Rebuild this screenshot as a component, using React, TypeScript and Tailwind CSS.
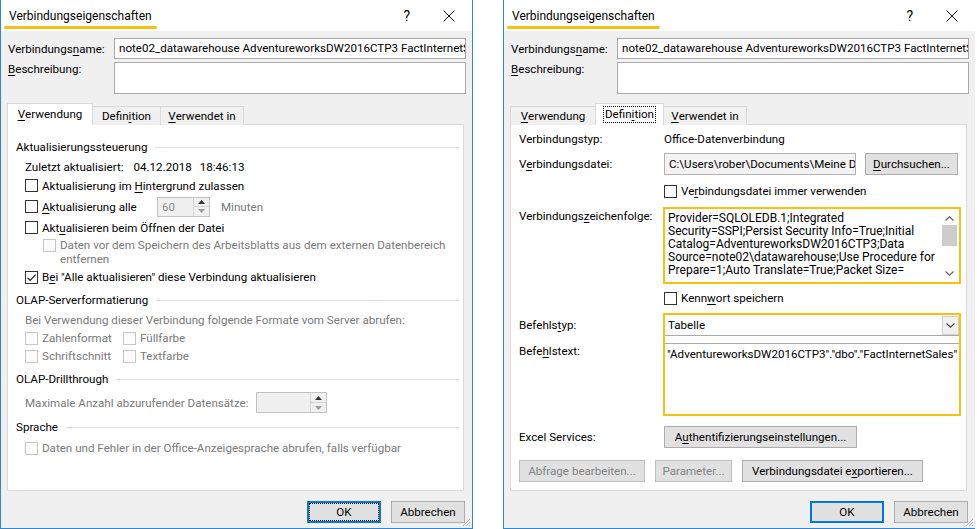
import React from 'react';

type Kids = { children?: React.ReactNode; className?: string };

const Key = ({ children }: Kids) => <span className="underline underline-offset-2 decoration-1">{children}</span>;

const Box = ({ checked, disabled }: { checked?: boolean; disabled?: boolean }) => (
  <span
    className={`w-[13px] h-[13px] shrink-0 border flex items-center justify-center ${
      disabled ? 'border-[#c8c8c8] bg-[#fcfcfc]' : 'border-[#333333] bg-white'
    }`}
  >
    {checked && (
      <svg viewBox="0 0 11 11" className="w-[11px] h-[11px]">
        <path d="M1.5 5.8 L4.2 8.4 L9.6 2.6" fill="none" stroke="#222" strokeWidth="1.2" />
      </svg>
    )}
  </span>
);

const Section = ({ title, className = '' }: { title: string; className?: string }) => (
  <div className={`flex items-center h-[16px] pl-[8px] pr-[4px] ${className}`}>
    <span>{title}</span>
    <span className="flex-1 h-px bg-[#dcdcdc] ml-[8px]" />
  </div>
);

const Button = ({ children, className = '', disabled, primary, focus }: Kids & { disabled?: boolean; primary?: boolean; focus?: boolean }) => (
  <div
    className={`h-[22px] flex items-center justify-center shrink-0 whitespace-nowrap ${
      primary ? 'border-2 border-[#0078d7] bg-[#e1e1e1]' : 'border border-[#adadad] bg-[#e1e1e1]'
    } ${disabled ? 'text-[#838383] border-[#bfbfbf] bg-[#cccccc]' : ''} ${className}`}
  >
    {focus ? (
      <span className="w-full h-full border border-dotted border-black flex items-center justify-center">{children}</span>
    ) : (
      children
    )}
  </div>
);

const Spin = ({ value, className = '' }: { value?: string; className?: string }) => (
  <div className={`flex border border-[#c2c2c2] bg-[#f0f0f0] ${className}`}>
    <span className="flex-1 pl-[4px] text-[#8a8a8a] flex items-center">{value}</span>
    <span className="w-[16px] flex flex-col border-l border-[#d4d4d4]">
      <span className="flex-1 flex items-center justify-center border-b border-[#d4d4d4]">
        <svg viewBox="0 0 7 4" className="w-[7px] h-[4px]"><path d="M0 4 L3.5 0 L7 4 Z" fill="#333" /></svg>
      </span>
      <span className="flex-1 flex items-center justify-center">
        <svg viewBox="0 0 7 4" className="w-[7px] h-[4px]"><path d="M0 0 L3.5 4 L7 0 Z" fill="#9a9a9a" /></svg>
      </span>
    </span>
  </div>
);

const Chevron = ({ up, color = '#606060' }: { up?: boolean; color?: string }) => (
  <svg viewBox="0 0 9 5" className="w-[9px] h-[5px]">
    <path d={up ? 'M0.5 4.5 L4.5 0.8 L8.5 4.5' : 'M0.5 0.5 L4.5 4.2 L8.5 0.5'} fill="none" stroke={color} strokeWidth="1.1" />
  </svg>
);

function TitleBar() {
  return (
    <div className="h-[31px] bg-white flex items-center shrink-0">
      <span className="relative ml-[8px] leading-[16px] text-[12px]">
        Verbindungseigenschaften
        <span className="absolute left-[-5px] right-[-5px] bottom-[-5px] h-[3px] rounded-full bg-[#f5c30f]" />
      </span>
      <span className="ml-auto mr-[33px] text-[14px] leading-[16px]">?</span>
      <svg viewBox="0 0 12 12" className="w-[12px] h-[12px] mr-[17px]">
        <path d="M0.5 0.5 L11.5 11.5 M11.5 0.5 L0.5 11.5" stroke="#111" strokeWidth="1" />
      </svg>
    </div>
  );
}

function Tabs({ active }: { active: number }) {
  const tabs = [
    { w: 'w-[86px]', label: <><Key>V</Key>erwendung</> },
    { w: 'w-[69px]', label: <>Defin<Key>i</Key>tion</> },
    { w: 'w-[84px]', label: <><Key>V</Key>erwendet in</> },
  ];
  return (
    <div className="flex items-end h-[22px] ml-[6px] mt-[9px] -mb-px relative z-10">
      {tabs.map((t, i) =>
        i === active ? (
          <div key={i} className={`${t.w} h-[22px] bg-white border border-b-0 border-[#d9d9d9] flex items-center justify-center pb-[1px]`}>
            {active === 1 ? <span className="border border-dotted border-black px-[1px] leading-[15px]">{t.label}</span> : t.label}
          </div>
        ) : (
          <div key={i} className={`${t.w} h-[19px] bg-[#f0f0f0] border border-b-0 border-[#d9d9d9] flex items-center justify-center ${i > active ? '-ml-px' : '-mr-px'}`}>
            {t.label}
          </div>
        )
      )}
    </div>
  );
}

function Grip() {
  return (
    <svg viewBox="0 0 10 10" className="absolute right-[1px] bottom-[1px] w-[10px] h-[10px]">
      <path d="M9 2 L2 9 M9 5 L5 9 M9 8 L8 9" stroke="#b5b5b5" strokeWidth="1" />
    </svg>
  );
}

function Dialog({ active, children, focusOk }: { active: number; children: React.ReactNode; focusOk?: boolean }) {
  return (
    <div className="relative w-[473px] h-[529px] shrink-0 border-x border-b border-[#2b88d8] bg-[#f0f0f0] flex flex-col">
      <TitleBar />
      <div className="flex items-center mt-[7px] h-[21px]">
        <span className="w-[113px] pl-[7px] shrink-0">Verbindungs<Key>n</Key>ame:</span>
        <div className="w-[352px] h-[21px] border border-[#a9a9a9] bg-white pl-[4px] leading-[19px] overflow-hidden whitespace-nowrap">
          note02_datawarehouse AdventureworksDW2016CTP3 FactInternetSales
        </div>
      </div>
      <div className="flex items-start mt-[3px]">
        <span className="w-[113px] pl-[7px] shrink-0 mt-[-1px]"><Key>B</Key>eschreibung:</span>
        <div className="w-[352px] h-[32px] border border-[#a9a9a9] bg-white" />
      </div>
      <Tabs active={active} />
      <div className="ml-[6px] w-[457px] h-[367px] bg-white border border-[#d9d9d9] flex flex-col">{children}</div>
      <div className="flex justify-end gap-[10px] mt-[10px] pr-[7px]">
        <Button primary focus={focusOk} className="w-[74px]">OK</Button>
        <Button className="w-[74px]">Abbrechen</Button>
      </div>
      <Grip />
    </div>
  );
}

function UsagePanel() {
  return (
    <div className="pt-[14px] flex flex-col whitespace-nowrap">
      <Section title="Aktualisierungssteuerung" />
      <div className="mt-[4px] h-[16px] pl-[17px] flex items-center">
        Zuletzt aktualisiert:<span className="ml-[10px]">04.12.2018</span>
        <span className="ml-[8px]">18:46:13</span>
      </div>
      <div className="h-[21px] pl-[17px] flex items-center gap-[4px]">
        <Box />
        <span>Aktualisierung im <Key>H</Key>intergrund zulassen</span>
      </div>
      <div className="h-[21px] pl-[17px] flex items-center gap-[4px]">
        <Box />
        <span className="w-[111px]"><Key>A</Key>ktualisierung alle</span>
        <Spin value="60" className="w-[53px] h-[20px]" />
        <span className="ml-[7px] text-[#7a7a7a]">Minuten</span>
      </div>
      <div className="h-[21px] pl-[17px] flex items-center gap-[4px]">
        <Box />
        <span>Akt<Key>u</Key>alisieren beim Öffnen der Datei</span>
      </div>
      <div className="pl-[35px] flex items-start gap-[4px] leading-[14px] text-[#7a7a7a]">
        <span className="mt-[1px]"><Box disabled /></span>
        <span>
          Daten vor dem Speichern des Arbeitsblatts aus dem externen Datenbereich
          <br />
          entfernen
        </span>
      </div>
      <div className="mt-[1px] h-[20px] pl-[17px] flex items-center gap-[4px]">
        <Box checked />
        <span>B<Key>e</Key>i "Alle aktualisieren" diese Verbindung aktualisieren</span>
      </div>
      <Section title="OLAP-Serverformatierung" className="mt-[5px]" />
      <div className="mt-[4px] h-[16px] pl-[17px] flex items-center text-[#7a7a7a]">
        Bei Verwendung dieser Verbindung folgende Formate vom Server abrufen:
      </div>
      <div className="mt-[1px] h-[18px] pl-[17px] flex items-center text-[#7a7a7a]">
        <span className="w-[98px] flex items-center gap-[4px]"><Box disabled />Zahlenformat</span>
        <span className="flex items-center gap-[4px]"><Box disabled />Füllfarbe</span>
      </div>
      <div className="h-[18px] pl-[17px] flex items-center text-[#7a7a7a]">
        <span className="w-[98px] flex items-center gap-[4px]"><Box disabled />Schriftschnitt</span>
        <span className="flex items-center gap-[4px]"><Box disabled />Textfarbe</span>
      </div>
      <Section title="OLAP-Drillthrough" className="mt-[6px]" />
      <div className="mt-[5px] h-[21px] pl-[17px] flex items-center text-[#7a7a7a]">
        <span className="w-[231px]">Maximale Anzahl abzurufender Datensätze:</span>
        <Spin className="w-[71px] h-[21px]" />
      </div>
      <Section title="Sprache" className="mt-[6px]" />
      <div className="mt-[4px] h-[18px] pl-[17px] flex items-center gap-[4px] text-[#7a7a7a]">
        <Box disabled />
        <span>Daten und Fehler in der Office-Anzeigesprache abrufen, falls verfügbar</span>
      </div>
    </div>
  );
}

const Label = ({ children, className = '' }: Kids) => (
  <span className={`w-[153px] pl-[8px] shrink-0 whitespace-nowrap ${className}`}>{children}</span>
);

function DefinitionPanel() {
  return (
    <div className="pt-[6px] flex flex-col">
      <div className="h-[16px] flex items-center">
        <Label>Verbindungstyp:</Label>
        <span>Office-Datenverbindung</span>
      </div>
      <div className="mt-[6px] h-[22px] flex items-center">
        <Label>V<Key>e</Key>rbindungsdatei:</Label>
        <div className="w-[192px] h-[22px] border border-[#b4b4b4] bg-[#f3f3f3] pl-[4px] leading-[20px] overflow-hidden whitespace-nowrap">
          C:\Users\rober\Documents\Meine Datenquellen\note02_datawarehouse.odc
        </div>
        <Button className="w-[93px] ml-[9px]"><Key>D</Key>urchsuchen...</Button>
      </div>
      <div className="mt-[8px] h-[16px] flex items-center">
        <Label />
        <Box />
        <span className="ml-[4px]">Ve<Key>r</Key>bindungsdatei immer verwenden</span>
      </div>
      <div className="mt-[8px] flex items-start">
        <Label className="mt-[1px]">Verbindungs<Key>z</Key>eichenfolge:</Label>
        <div className="-ml-px w-[298px] h-[77px] border-2 border-[#f5c30f] bg-white flex">
          <div className="flex-1 pl-[3px] pt-[3px] leading-[13px] text-[12px] overflow-hidden whitespace-nowrap">
            Provider=SQLOLEDB.1;Integrated
            <br />
            Security=SSPI;Persist Security Info=True;Initial
            <br />
            Catalog=AdventureworksDW2016CTP3;Data
            <br />
            Source=note02\datawarehouse;Use Procedure for
            <br />
            Prepare=1;Auto Translate=True;Packet Size=
          </div>
          <div className="w-[17px] mr-[1px] flex flex-col items-center py-[3px]">
            <span className="h-[12px] flex items-center"><Chevron up /></span>
            <span className="w-[15px] h-[21px] bg-[#cdcdcd] mt-[1px]" />
            <span className="flex-1" />
            <span className="h-[12px] flex items-center"><Chevron /></span>
          </div>
        </div>
      </div>
      <div className="mt-[6px] h-[16px] flex items-center">
        <Label />
        <Box />
        <span className="ml-[4px]">Kenn<Key>w</Key>ort speichern</span>
      </div>
      <div className="mt-[7px] flex items-start">
        <div className="flex flex-col">
          <Label className="mt-[4px] h-[16px] leading-[16px]">Befehls<Key>t</Key>yp:</Label>
          <Label className="mt-[10px] h-[16px] leading-[16px]">Befe<Key>h</Key>lstext:</Label>
        </div>
        <div className="-ml-px w-[298px] h-[103px] border-2 border-[#f5c30f] bg-white flex flex-col">
          <div className="h-[21px] flex items-center border-b border-[#a9a9a9]">
            <span className="flex-1 pl-[3px]">Tabelle</span>
            <span className="w-[17px] h-[19px] border border-[#cfcfcf] bg-[#f0f0f0] flex items-center justify-center">
              <Chevron color="#444" />
            </span>
          </div>
          <div className="mt-[7px] border-t border-[#a9a9a9] flex-1 pl-[2px] pt-[2px] whitespace-nowrap overflow-hidden">
            "AdventureworksDW2016CTP3"."dbo"."FactInternetSales"
          </div>
        </div>
      </div>
      <div className="mt-[10px] h-[22px] flex items-center">
        <Label>Excel Services:</Label>
        <Button className="w-[193px]">A<Key>u</Key>thentifizierungseinstellungen...</Button>
      </div>
      <div className="mt-[12px] h-[22px] flex items-center pl-[8px]">
        <Button disabled className="w-[126px]">Abfrage bearbeiten...</Button>
        <Button disabled className="w-[77px] ml-[10px]">Parameter...</Button>
        <Button className="w-[181px] ml-[10px]">Verbindungsdatei e<Key>x</Key>portieren...</Button>
      </div>
    </div>
  );
}

export default function App() {
  return (
    <div className="w-[977px] h-[529px] bg-white flex overflow-hidden text-[11.6px] leading-[16px] text-black font-['Roboto',sans-serif]">
      <Dialog active={0} focusOk>
        <UsagePanel />
      </Dialog>
      <div className="w-[30px] shrink-0" />
      <div className="w-[472px] shrink-0 overflow-hidden">
        <Dialog active={1}>
          <DefinitionPanel />
        </Dialog>
      </div>
    </div>
  );
}
